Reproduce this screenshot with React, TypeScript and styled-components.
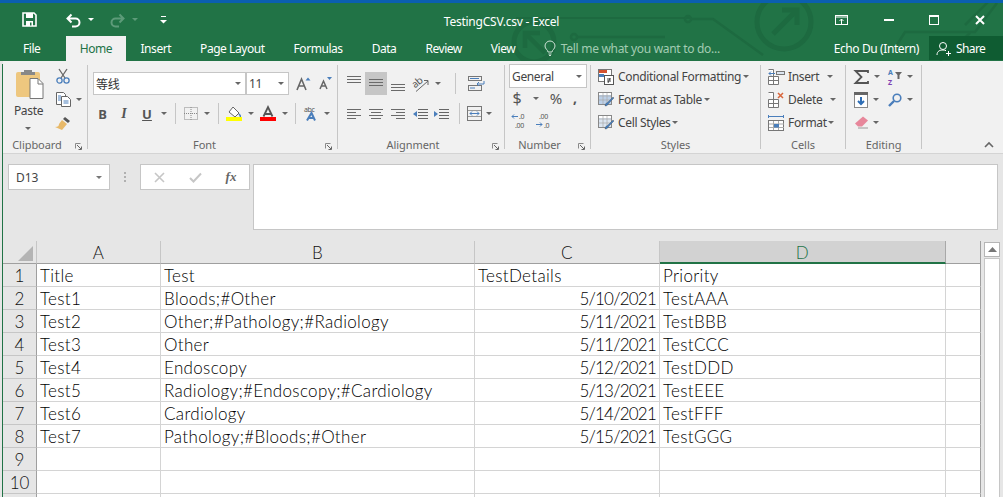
import React from "react";
import styled, { createGlobalStyle } from "styled-components";

const Global = createGlobalStyle`
  html, body { margin: 0; padding: 0; height: 100%; overflow: hidden; background: #e6e6e6; }
  #root { height: 100%; }
`;
const UI = `"Noto Sans", "Open Sans", sans-serif`;
const CELL = `Lato, Roboto, sans-serif`;

const Win = styled.div`
  width: 1003px; height: 497px; overflow: hidden; position: relative;
  display: flex; flex-direction: column; background: #e6e6e6;
  border-top: 3px solid #0b5fb0; box-sizing: border-box;
  font-family: ${UI}; color: #444;
`;
const Head = styled.div`
  height: 58px; background: #217346; position: relative; flex: none; display: flex; flex-direction: column;
  overflow: hidden;
`;
const Deco = styled.svg`position: absolute; left: 0; top: 0; pointer-events: none;`;
const TitleRow = styled.div`
  height: 33px; display: grid; grid-template-columns: 1fr auto 1fr; align-items: center; position: relative; color: #fff;
`;
const Quick = styled.div`display: flex; align-items: center; padding-left: 22px;`;
const QCell = styled.span<{ $w: number }>`width: ${p => p.$w}px; display: inline-flex; justify-content: flex-start; align-items: center;`;
const Title = styled.div`font-size: 12px; color: #fff; padding-top: 4px; letter-spacing: -0.02em;`;
const WinBtns = styled.div`display: flex; justify-content: flex-end; align-items: center; padding-right: 18px; gap: 35.66px;`;
const TabRow = styled.div`height: 25px; display: flex; align-items: stretch; position: relative; color: #fff; font-size: 12px; letter-spacing: -0.45px;`;
const FileTab = styled.div`width: 43px; padding-left: 23px; display: flex; align-items: center;`;
const Tab = styled.div<{ $active?: boolean }>`
  padding: 0 14.5px; display: flex; align-items: center; white-space: nowrap;
  ${p => p.$active ? "background:#f1f1f1;color:#217346;width:60px;box-sizing:border-box;padding:0;justify-content:center;" : ""}
`;
const Tell = styled.div`display: flex; align-items: center; gap: 5px; padding-left: 14px; color: #a3ccb3; white-space: nowrap; letter-spacing: -0.3px;`;
const User = styled.div`margin-left: auto; display: flex; align-items: center; padding-right: 10px; white-space: nowrap; letter-spacing: -0.4px;`;
const Share = styled.div`width: 74px; height: 24px; margin-bottom: 1px; background: #0f5c32; display: flex; align-items: center; gap: 5px; padding-left: 7px; box-sizing: border-box; letter-spacing: -0.6px;`;

const Ribbon = styled.div`
  height: 92px; flex: none; margin-left: 3px; background: #f1f1f1; border-bottom: 1px solid #d4d4d4;
  display: flex; position: relative; font-size: 12px; letter-spacing: -0.35px;
`;
const Group = styled.div<{ $w: number; $last?: boolean }>`
  width: ${p => p.$w}px; box-sizing: border-box; flex: none; position: relative;
  display: flex; flex-direction: column; margin: 4px 0;
  ${p => p.$last ? "" : "border-right: 1px solid #c6c6c6;"}
`;
const GroupBody = styled.div`flex: 1; display: flex; min-height: 0;`;
const GroupLabel = styled.div<{ $pr?: number }>`
  height: 16px; line-height: 16px; text-align: center; color: #666; font-size: 11px; letter-spacing: -0.05px; margin-bottom: -4px;
  padding-right: ${p => p.$pr ?? 0}px;
`;
const Launcher = styled.span`position: absolute; right: 5px; bottom: -1px; width: 7px; height: 7px; display: block;`;
const Col = styled.div<{ $gap?: number; $pl?: number; $pt?: number }>`
  display: flex; flex-direction: column; flex: none; gap: ${p => p.$gap ?? 0}px; padding-left: ${p => p.$pl ?? 0}px; padding-top: ${p => p.$pt ?? 0}px;
`;
const Row = styled.div<{ $h?: number; $pl?: number; $gap?: number }>`
  display: flex; flex: none; align-items: center; height: ${p => p.$h ? p.$h + "px" : "auto"}; padding-left: ${p => p.$pl ?? 0}px; gap: ${p => p.$gap ?? 0}px; white-space: nowrap;
`;
const Tool = styled.span<{ $w: number; $sel?: boolean; $h?: number; $top?: number }>`
  width: ${p => p.$w}px; height: ${p => p.$h ? p.$h + "px" : "auto"}; flex: none; display: inline-flex; justify-content: center; box-sizing: border-box;
  align-items: ${p => p.$top !== undefined ? "flex-start" : "center"};
  ${p => p.$top !== undefined ? `padding-top:${p.$top}px;` : ""}
  ${p => p.$sel ? "background:#c6c6c6;" : ""}
`;
const Caret = styled.span<{ $c?: string }>`
  width: 0; height: 0; display: inline-block; flex: none;
  border-left: 3.5px solid transparent; border-right: 3.5px solid transparent; border-top: 3.5px solid ${p => p.$c ?? "#666"};
`;
const VSep = styled.span`width: 1px; height: 21px; background: #c6c6c6; display: block;`;
const PasteBtn = styled.div`width: 50px; margin-left: 3px; display: flex; flex-direction: column; align-items: center; padding-top: 4px; color: #444;`;
const PasteLabel = styled.span`margin: 4px 4px 0 0; line-height: 14px;`;
const PasteCaret = styled.span`margin: 8px 6px 0 0; display: block; line-height: 0;`;
const Combo = styled.div<{ $w: number; $h: number; $up?: number }>`
  width: ${p => p.$w}px; height: ${p => p.$h}px; box-sizing: border-box; background: #fff; border: 1px solid #c6c6c6;
  display: flex; align-items: center; justify-content: space-between; padding: 0 4px 0 2px; flex: none; color: #444;
  margin-top: ${p => -(p.$up ?? 0)}px;
`;
const ComboCJK = styled.span`font-family: "Noto Sans CJK SC", sans-serif; font-size: 12px; color: #333;`;
const StyleItem = styled.div`
  display: flex; flex: none; align-items: center; height: 23px; gap: 2px; color: #444; white-space: nowrap;
  & > svg { margin-right: 2px; }
`;
const CellItem = styled.div<{ $cw: number }>`
  display: flex; flex: none; align-items: center; height: 23px; gap: 3px; color: #444;
  & > b { font-weight: 400; width: ${p => p.$cw}px; display: inline-block; }
`;
const Collapse = styled.span`position: absolute; right: 9px; bottom: 5px; line-height: 0;`;
const Glyph = styled.span<{ $s: number }>`font-size: ${p => p.$s}px; color: #555; line-height: 16px; letter-spacing: 0;`;
const BoldGlyph = styled(Glyph)`font-weight: 700;`;
const SerifGlyph = styled(BoldGlyph)`font-family: "Liberation Serif", serif; font-style: italic;`;
const UnderGlyph = styled(BoldGlyph)`text-decoration: underline;`;

const FormulaBar = styled.div`
  height: 87px; flex: none; margin-left: 3px; padding: 10px 5px 0 5px; box-sizing: border-box; display: flex; align-items: flex-start;
  background: #e6e6e6; border-left: 0; position: relative;
`;
const NameBox = styled.div`
  width: 102px; height: 26px; box-sizing: border-box; background: #fff; border: 1px solid #c6c6c6; display: flex; align-items: center; justify-content: space-between; padding: 0 7px; font-size: 12px; color: #444;
`;
const Dots = styled.div`width: 30px; height: 26px; display: flex; flex-direction: column; align-items: center; justify-content: center; gap: 2px; & > i { width: 2px; height: 2px; background: #b0b0b0; display: block; }`;
const FxBox = styled.div`width: 110px; height: 26px; box-sizing: border-box; background: #fff; border: 1px solid #c6c6c6; display: flex; align-items: center; margin-right: 3px;`;
const FxCell = styled.span`flex: 1; display: inline-flex; justify-content: center; align-items: center;`;
const FxText = styled.span`font-family: "Liberation Serif", serif; font-style: italic; font-size: 13px; color: #666; font-weight: 700;`;
const FormulaInput = styled.div`flex: 1; height: 66px; box-sizing: border-box; background: #fff; border: 1px solid #c6c6c6;`;

const SheetWrap = styled.div`flex: 1; margin-left: 3px; display: flex; min-height: 0; overflow: hidden; position: relative;`;
const Green = styled.span`position: absolute; left: 2px; top: 61px; width: 1px; bottom: 0; background: #217346;`;
const Sheet = styled.div`
  display: grid; grid-template-columns: 34px 124px 314px 185px 286px 35px; grid-auto-rows: 23px; align-content: start; flex: none;
  font-family: ${CELL}; font-size: 17px; font-weight: 300; letter-spacing: 0.33px; color: #000;
`;
const Corner = styled.div`height: 23px; background: #e6e6e6; border-bottom: 1px solid #9f9f9f; border-right: 1px solid #c6c6c6; box-sizing: border-box; display: flex; align-items: flex-end; justify-content: flex-end; padding: 0 3px 2px 0;`;
const ColHead = styled.div<{ $sel?: boolean }>`
  height: 23px; box-sizing: border-box; text-align: center; line-height: 24px; font-size: 17px;
  background: ${p => p.$sel ? "#d2d2d2" : "#e6e6e6"}; color: ${p => p.$sel ? "#217346" : "#111"};
  border-right: 1px solid ${p => p.$sel ? "#a8a8a8" : "#c6c6c6"};
  border-bottom: ${p => p.$sel ? "2px solid #217346" : "1px solid #9f9f9f"};
`;
const ColBlank = styled.div`height: 23px; box-sizing: border-box; border-bottom: 1px solid #9f9f9f; border-right: 1px solid #9f9f9f;`;
const RowHead = styled.div`background: #e6e6e6; text-align: center; line-height: 24px; box-sizing: border-box; border-right: 1px solid #9f9f9f; border-bottom: 1px solid #c6c6c6; color: #111; letter-spacing: 0;`;
const Cell = styled.div<{ $right?: boolean; $edge?: boolean }>`
  background: #fff; box-sizing: border-box; line-height: 24px; padding: 0 3px; white-space: nowrap; overflow: hidden;
  border-right: 1px solid ${p => p.$edge ? "#9f9f9f" : "#d4d4d4"}; border-bottom: 1px solid #d4d4d4;
  text-align: ${p => p.$right ? "right" : "left"};
  ${p => p.$right ? "letter-spacing: -0.8px;" : ""}
`;
const Scroll = styled.div`width: 16px; margin: 1px 0 0 3px; flex: none; display: flex; flex-direction: column; gap: 1px;`;
const ScrollBtn = styled.div`height: 15px; background: #fff; border: 1px solid #b5b5b5; box-sizing: border-box; display: flex; align-items: center; justify-content: center;`;
const ScrollTrack = styled.div`flex: 1; background: #fff; border: 1px solid #c6c6c6; border-bottom: 0; box-sizing: border-box;`;

const Svg: React.FC<{ w: number; h: number; children: React.ReactNode }> = ({ w, h, children }) => (
  <svg width={w} height={h} viewBox={`0 0 ${w} ${h}`} fill="none" style={{ display: "block", flex: "none", overflow: "visible" }}>{children}</svg>
);
const L: React.FC = () => (
  <Launcher>
    <Svg w={7} h={7}><path d="M.5 .5h5M.5 .5v5" stroke="#8a8a8a" /><path d="M2 2l4 4M6.500 3.500v3h-3" stroke="#666" /></Svg>
  </Launcher>
);
const Lines: React.FC<{ ws: [number, number][]; gap: number }> = ({ ws, gap }) => (
  <Svg w={14} h={(ws.length - 1) * gap + 1}>
    {ws.map(([x, l], i) => <rect key={i} x={x} y={i * gap} width={l} height={1} fill="#6a6a6a" />)}
  </Svg>
);
const blue = "#4a7ebb";
const CF = () => (
  <Svg w={16} h={16}>
    <rect x=".5" y=".5" width="13" height="12" fill="#fff" stroke="#777" />
    <rect x="1" y="1" width="8" height="3" fill="#d35230" /><rect x="1" y="5" width="5" height="3" fill="#4a7ebb" />
    <rect x="6.500" y="6.500" width="9" height="9" fill="#fff" stroke="#555" />
    <path d="M9 10h4M9 12h4M12 9l-2 5" stroke="#444" />
  </Svg>
);
const TableIco: React.FC<{ fill: string }> = ({ fill }) => (
  <Svg w={16} h={16}>
    <rect x=".5" y=".5" width="13" height="12" fill="#fff" stroke="#888" />
    <rect x="1" y="3" width="12" height="9" fill={fill} />
    <path d="M1 4h12M1 8h12M5 1v11M9 1v11" stroke="#aaa" strokeWidth=".7" />
    <path d="M7 14c0-3 2-3 3-4l5-5 1 1-5 5c-1 1-1 3-4 3z" fill="#3f7cc0" stroke="#555" strokeWidth=".4" />
  </Svg>
);
const GridIco: React.FC<{ children?: React.ReactNode }> = ({ children }) => (
  <Svg w={17} h={16}>
    <path d="M.5 7.500h10v8H.5zM5.500 7.500v8M.5 11.500h10M.5 .5h5v7" stroke="#777" fill="#fff" />
    {children}
  </Svg>
);

export default function App() {
  const rows: [string, string, string, string][] = [
    ["Title", "Test", "TestDetails", "Priority"],
    ["Test1", "Bloods;#Other", "5/10/2021", "TestAAA"],
    ["Test2", "Other;#Pathology;#Radiology", "5/11/2021", "TestBBB"],
    ["Test3", "Other", "5/11/2021", "TestCCC"],
    ["Test4", "Endoscopy", "5/12/2021", "TestDDD"],
    ["Test5", "Radiology;#Endoscopy;#Cardiology", "5/13/2021", "TestEEE"],
    ["Test6", "Cardiology", "5/14/2021", "TestFFF"],
    ["Test7", "Pathology;#Bloods;#Other", "5/15/2021", "TestGGG"],
    ["", "", "", ""], ["", "", "", ""], ["", "", "", ""],
  ];
  return (
    <Win>
      <Global />
      <Head>
        <Deco width={1003} height={58} viewBox="0 0 1003 58" fill="none">
          <g stroke="#1d6a40" strokeWidth="2.500">
            <circle cx="534" cy="39" r="20" strokeWidth="5" />
            <path d="M545 50L526 31M525 45V30h15" strokeWidth="4.500" />
            <path d="M516 15H690" strokeWidth="2" />
            <circle cx="688" cy="16" r="3" />
            <path d="M691 16h22l50 36" />
            <circle cx="574" cy="34" r="3" />
            <path d="M577 34H665" />
            <circle cx="784" cy="19" r="27" strokeWidth="5" />
            <path d="M773 31L797 7M782 7h15v15" strokeWidth="5" />
            <path d="M893 48l12-19h70l22-29M940 58l30-28M965 22L990 -3" />
          </g>
        </Deco>
        <TitleRow>
          <Quick>
            <QCell $w={44}>
              <Svg w={15} h={15}><path d="M1 1h11l2 2v11H1z" stroke="#fff" strokeWidth="1.600" /><rect x="4" y="1" width="7" height="5" fill="#fff" /><rect x="4" y="9" width="7" height="5" fill="#fff" /><rect x="8" y="10.500" width="1.500" height="3" fill="#217346" /></Svg>
            </QCell>
            <QCell $w={22}><Svg w={15} h={14}><path d="M1.500 5.500h8a4 4 0 0 1 0 8H6M5.500 1.500L1.500 5.500l4 4" stroke="#fff" strokeWidth="2" /></Svg></QCell>
            <QCell $w={22}><Caret $c="#fff" /></QCell>
            <QCell $w={22}><Svg w={15} h={14}><path d="M13.500 5.500h-8a4 4 0 0 0 0 8H9M9.500 1.500l4 4-4 4" stroke="#5d9b79" strokeWidth="2" /></Svg></QCell>
            <QCell $w={28}><Caret $c="#5d9b79" /></QCell>
            <QCell $w={8}><Svg w={7} h={8}><rect x="1" y="0" width="5" height="1" fill="#fff" /><path d="M0 4h7L3.500 7.500z" fill="#fff" /></Svg></QCell>
          </Quick>
          <Title>TestingCSV.csv - Excel</Title>
          <WinBtns>
            <Svg w={13} h={10}><rect x=".5" y=".5" width="12" height="9" stroke="#fff" /><path d="M0 2h13" stroke="#fff" /><path d="M6.500 9V4M4.500 6l2-2 2 2" stroke="#fff" /></Svg>
            <Svg w={10} h={10}><rect x="0" y="4" width="10" height="2" fill="#fff" /></Svg>
            <Svg w={10} h={10}><rect x=".5" y=".5" width="9" height="9" stroke="#fff" /><rect width="10" height="2" fill="#fff" /></Svg>
            <Svg w={10} h={10}><path d="M1 1l8 8M9 1l-8 8" stroke="#fff" strokeWidth="2" /></Svg>
          </WinBtns>
        </TitleRow>
        <TabRow>
          <FileTab>File</FileTab>
          <Tab $active>Home</Tab>
          <Tab>Insert</Tab><Tab>Page Layout</Tab><Tab>Formulas</Tab><Tab>Data</Tab><Tab>Review</Tab><Tab>View</Tab>
          <Tell>
            <Svg w={12} h={15}><path d="M4 11c0-2-3-3-3-6a5 5 0 0 1 10 0c0 3-3 4-3 6zM4.500 13h3M5 14.500h2" stroke="#cfe3d7" /></Svg>
            Tell me what you want to do...
          </Tell>
          <User>Echo Du (Intern)</User>
          <Share>
            <Svg w={15} h={15}><circle cx="7" cy="5" r="3.500" stroke="#fff" /><path d="M1 14c0-4 3-5 6-5 1 0 2 .2 3 .7M10 12.500h5M12.500 10v5" stroke="#fff" /></Svg>
            Share
          </Share>
        </TabRow>
      </Head>

      <Ribbon>
        <Group $w={85}>
          <GroupBody>
            <PasteBtn>
              <Svg w={29} h={31}>
                <rect x="0" y="3" width="24" height="25" rx="2" fill="#eec77f" />
                <path d="M8 3V1h8v2h3v3H5V3z" fill="#888" />
                <path d="M14 9.500h8l5 5v15H14z" fill="#fff" stroke="#777" />
                <path d="M22 10v5h5" stroke="#777" />
              </Svg>
              <PasteLabel>Paste</PasteLabel>
              <PasteCaret><Caret /></PasteCaret>
            </PasteBtn>
            <Col>
              <Tool $w={16} $h={23}>
                <Svg w={15} h={15}><path d="M3 0l6 9M11 0L5 9" stroke="#666" strokeWidth="1.300" /><circle cx="3.500" cy="11.500" r="2.600" stroke={blue} strokeWidth="1.300" /><circle cx="10.500" cy="11.500" r="2.600" stroke={blue} strokeWidth="1.300" /></Svg>
              </Tool>
              <Row $h={23}>
                <Tool $w={16}><Svg w={15} h={15}><path d="M.5 .5h7l2 2v10h-9z" fill="#fff" stroke="#666" /><path d="M5.500 4.500h6l3 3v7h-9z" fill="#fff" stroke="#666" /><path d="M2 4h3M2 6h3M2 8h3M7.500 9h5M7.500 11h5" stroke={blue} /></Svg></Tool>
                <Tool $w={16}><Caret /></Tool>
              </Row>
              <Tool $w={16} $h={23}>
                <Svg w={16} h={14}><path d="M10 1l5 4-2 2-5-4z" fill="#555" /><path d="M7 4l5 4-5 6-7-3c3 0 4-1 4-3z" fill="#e8b969" /></Svg>
              </Tool>
            </Col>
          </GroupBody>
          <GroupLabel $pr={16}>Clipboard</GroupLabel>
          <L />
        </Group>

        <Group $w={250}>
          <GroupBody>
            <Col $pt={7} $gap={8}>
              <Row $pl={5}>
                <Combo $w={153} $h={23}><ComboCJK>等线</ComboCJK><Caret /></Combo>
                <Combo $w={43} $h={23}><span>11</span><Caret /></Combo>
                <Tool $w={29}><Svg w={15} h={14}><path d="M1 13L5.500 2 10 13M3 9h5" stroke="#666" strokeWidth="1.600" /><path d="M9.500 3.500L12 .5l2.500 3z" fill={blue} /></Svg></Tool>
                <Tool $w={14}><Svg w={13} h={13}><path d="M1 12l3.500-8L8 12M2.500 9h4" stroke="#666" strokeWidth="1.500" /><path d="M8 0h5l-2.500 3z" fill={blue} /></Svg></Tool>
              </Row>
              <Row $pl={4}>
                <Tool $w={21}><BoldGlyph $s={13}>B</BoldGlyph></Tool>
                <Tool $w={22}><SerifGlyph $s={14}>I</SerifGlyph></Tool>
                <Tool $w={24}><UnderGlyph $s={13}>U</UnderGlyph></Tool>
                <Tool $w={10}><Caret /></Tool>
                <Tool $w={12}><VSep /></Tool>
                <Tool $w={19}><Svg w={14} h={13}><rect x=".5" y=".5" width="13" height="12" stroke="#888" strokeDasharray="1 1" /><path d="M7 0v13M0 6.500h14" stroke="#888" strokeDasharray="1 1" /></Svg></Tool>
                <Tool $w={14}><Caret /></Tool>
                <Tool $w={8}><VSep /></Tool>
                <Tool $w={24}><Svg w={16} h={15}><path d="M7 1l6 6-4 4-6-5z" stroke="#666" fill="#fff" /><path d="M13 8c1 1 2 2 1 3" stroke={blue} strokeWidth="1.500" /><rect y="11" width="16" height="4" fill="#ff0" /></Svg></Tool>
                <Tool $w={9}><Caret /></Tool>
                <Tool $w={26}><Svg w={16} h={15}><path d="M3.500 10.500L8 1l4.500 9.500M5 8h6" stroke="#555" strokeWidth="1.800" /><rect y="11" width="16" height="4" fill="#f00" /></Svg></Tool>
                <Tool $w={8}><Caret /></Tool>
                <Tool $w={12}><VSep /></Tool>
                <Tool $w={20}><Svg w={15} h={15}><text x="0" y="6" fontSize="7" fill="#555" fontFamily="Noto Sans">abc</text><path d="M3 14.500L7.500 7 11 14.500M5 12h5" stroke={blue} strokeWidth="2" /></Svg></Tool>
                <Tool $w={12}><Caret /></Tool>
              </Row>
            </Col>
          </GroupBody>
          <GroupLabel $pr={16}>Font</GroupLabel>
          <L />
        </Group>

        <Group $w={167}>
          <GroupBody>
            <Col $pt={7} $gap={8}>
              <Row $pl={5}>
                <Tool $w={22} $h={23} $top={4}><Lines ws={[[0, 14], [0, 14], [0, 14]]} gap={3} /></Tool>
                <Tool $w={22} $h={23} $sel $top={7}><Lines ws={[[0, 14], [0, 14], [0, 14]]} gap={3} /></Tool>
                <Tool $w={22} $h={23} $top={12}><Lines ws={[[0, 14], [0, 14], [0, 14]]} gap={3} /></Tool>
                <Tool $w={24}><Svg w={16} h={16}><text x="0" y="9" fontSize="10" fill="#555" fontFamily="Noto Sans" transform="rotate(-40 6 8)">ab</text><path d="M3 15.500L15 5M11 4.500h4V9" stroke="#666" /></Svg></Tool>
                <Tool $w={10}><Caret /></Tool>
                <Tool $w={25}><VSep /></Tool>
                <Tool $w={16}><Svg w={17} h={15}><rect x=".5" y=".5" width="13" height="4" stroke="#777" /><rect x=".5" y="9.500" width="13" height="5" stroke="#777" /><path d="M2 2.500h9M2 12h5M16 5v3H9M11 6L9 8l2 2" stroke={blue} /></Svg></Tool>
              </Row>
              <Row $pl={5}>
                <Tool $w={22}><Lines ws={[[0, 14], [0, 9], [0, 14], [0, 9]]} gap={3} /></Tool>
                <Tool $w={22}><Lines ws={[[0, 14], [2, 10], [0, 14], [2, 10]]} gap={3} /></Tool>
                <Tool $w={22}><Lines ws={[[0, 14], [5, 9], [0, 14], [5, 9]]} gap={3} /></Tool>
                <Tool $w={21}><Svg w={16} h={10}><path d="M6 1h10M6 4h10M6 7h10M6 10h10" stroke="#666" transform="translate(0 -.5)" /><path d="M5 2L1 5l4 3z" fill={blue} /></Svg></Tool>
                <Tool $w={22}><Svg w={16} h={10}><path d="M6 1h10M6 4h10M6 7h10M6 10h10" stroke="#666" transform="translate(0 -.5)" /><path d="M1 2l4 3-4 3z" fill={blue} /></Svg></Tool>
                <Tool $w={14}><VSep /></Tool>
                <Tool $w={16}><Svg w={15} h={15}><rect x=".5" y=".5" width="14" height="14" stroke="#777" /><path d="M1 4.500h13M1 10.500h13" stroke="#999" /><path d="M3 7.500h9M5 5.500l-2 2 2 2M10 5.500l2 2-2 2" stroke={blue} /></Svg></Tool>
                <Tool $w={14}><Caret /></Tool>
              </Row>
            </Col>
          </GroupBody>
          <GroupLabel $pr={16}>Alignment</GroupLabel>
          <L />
        </Group>

        <Group $w={86}>
          <GroupBody>
            <Col $pl={4}>
              <Combo $w={78} $h={24} $up={1}><span>General</span><Caret /></Combo>
              <Row $h={20}>
                <Tool $w={16}><Glyph $s={16}>$</Glyph></Tool>
                <Tool $w={22}><Caret /></Tool>
                <Tool $w={18}><Glyph $s={15}>%</Glyph></Tool>
                <Tool $w={20}><BoldGlyph $s={14}>,</BoldGlyph></Tool>
              </Row>
              <Row $h={24} $pl={3} $gap={8}>
                <Svg w={16} h={15}><text x="7" y="5.500" fontSize="7" fill="#555" fontFamily="Noto Sans">.0</text><text x="3" y="15" fontSize="7" fill="#555" fontFamily="Noto Sans">.00</text><path d="M0 3.500h6M2 1.500l-2 2 2 2" stroke={blue} /></Svg>
                <Svg w={15} h={15}><text x="3" y="5.500" fontSize="7" fill="#555" fontFamily="Noto Sans">.00</text><text x="8" y="15" fontSize="7" fill="#555" fontFamily="Noto Sans">.0</text><path d="M0 11.500h6M4 9.500l2 2-2 2" stroke={blue} /></Svg>
              </Row>
            </Col>
          </GroupBody>
          <GroupLabel $pr={16}>Number</GroupLabel>
          <L />
        </Group>

        <Group $w={170}>
          <GroupBody>
            <Col $pl={7}>
              <StyleItem><CF />Conditional Formatting<Caret /></StyleItem>
              <StyleItem><TableIco fill="#bcd0e8" />Format as Table<Caret /></StyleItem>
              <StyleItem><TableIco fill="#dbe5f1" />Cell Styles<Caret /></StyleItem>
            </Col>
          </GroupBody>
          <GroupLabel>Styles</GroupLabel>
        </Group>

        <Group $w={85}>
          <GroupBody>
            <Col $pl={7}>
              <CellItem $cw={36}>
                <GridIco><rect x="8.500" y="2.500" width="8" height="3" stroke="#777" fill="#dbe5f1" /><path d="M1 4.500h6M3 2.500l-2 2 2 2" stroke={blue} /></GridIco>
                <b>Insert</b><Caret />
              </CellItem>
              <CellItem $cw={39}>
                <GridIco><path d="M10 1l5 5M15 1l-5 5" stroke="#d9663c" strokeWidth="1.500" /></GridIco>
                <b>Delete</b><Caret />
              </CellItem>
              <CellItem $cw={37}>
                <Svg w={17} h={16}><path d="M.5 1.500h15M.5 0v3M15.500 0v3" stroke={blue} /><rect x=".5" y="5.500" width="15" height="10" stroke="#777" fill="#fff" /><path d="M1 9h15M1 12.500h15M5.500 6v9M10.500 6v9" stroke="#aaa" /><rect x="6" y="9" width="5" height="3.500" fill={blue} /></Svg>
                <b>Format</b><Caret />
              </CellItem>
            </Col>
          </GroupBody>
          <GroupLabel>Cells</GroupLabel>
        </Group>

        <Group $w={76}>
          <GroupBody>
            <Col $pl={7}>
              <Row $h={23}>
                <Tool $w={16}><Svg w={15} h={14}><path d="M14 3V1H1.500l6 6-6 6H14v-2" stroke="#555" strokeWidth="1.800" /></Svg></Tool>
                <Tool $w={16}><Caret /></Tool>
                <Tool $w={22}><Svg w={18} h={16}><text x="1" y="6" fontSize="7" fill={blue} fontFamily="Noto Sans" fontWeight="700">A</text><text x="1" y="15.600" fontSize="7" fill="#7d3fb2" fontFamily="Noto Sans" fontWeight="700">Z</text><path d="M8 3h7l-2.500 3v4H10.500V6z" fill="#666" /></Svg></Tool>
                <Tool $w={6}><Caret /></Tool>
              </Row>
              <Row $h={23}>
                <Tool $w={16}><Svg w={14} h={16}><rect x=".5" y=".5" width="13" height="15" fill="#fff" stroke="#888" /><rect width="14" height="3" fill="#666" /><path d="M7 5v7M4 9l3 3 3-3" stroke="#2d6db5" strokeWidth="2" /></Svg></Tool>
                <Tool $w={14}><Caret /></Tool>
                <Tool $w={24}><Svg w={14} h={14}><circle cx="9" cy="5" r="3.800" stroke={blue} strokeWidth="1.600" /><path d="M6 8l-5 5" stroke={blue} strokeWidth="2.400" /></Svg></Tool>
                <Tool $w={6}><Caret /></Tool>
              </Row>
              <Row $h={23}>
                <Tool $w={16}><Svg w={15} h={13}><path d="M9 .5l5 4-6 6H4l-3-3z" fill="#e7879b" /><path d="M4 12h10" stroke="#999" /></Svg></Tool>
                <Tool $w={14}><Caret /></Tool>
              </Row>
            </Col>
          </GroupBody>
          <GroupLabel>Editing</GroupLabel>
        </Group>
        <Collapse><Svg w={10} h={6}><path d="M1 5l4-4 4 4" stroke="#666" strokeWidth="1.600" /></Svg></Collapse>
      </Ribbon>

      <FormulaBar>
        <NameBox>D13<Caret $c="#777" /></NameBox>
        <Dots><i /><i /><i /></Dots>
        <FxBox>
          <FxCell><Svg w={11} h={11}><path d="M1 1l9 9M10 1l-9 9" stroke="#c6c6c6" strokeWidth="1.600" /></Svg></FxCell>
          <FxCell><Svg w={13} h={11}><path d="M1 6l3.500 3.500L12 1.500" stroke="#c6c6c6" strokeWidth="2" /></Svg></FxCell>
          <FxCell><FxText>fx</FxText></FxCell>
        </FxBox>
        <FormulaInput />
      </FormulaBar>

      <SheetWrap>
        <Sheet>
          <Corner><Svg w={15} h={15}><path d="M15 0v15H0z" fill="#b4b4b4" /></Svg></Corner>
          <ColHead>A</ColHead><ColHead>B</ColHead><ColHead>C</ColHead><ColHead $sel>D</ColHead><ColBlank />
          {rows.map((r, i) => (
            <React.Fragment key={i}>
              <RowHead>{i < 10 ? i + 1 : ""}</RowHead>
              <Cell>{r[0]}</Cell>
              <Cell>{r[1]}</Cell>
              <Cell $right={i > 0}>{r[2]}</Cell>
              <Cell>{r[3]}</Cell>
              <Cell $edge />
            </React.Fragment>
          ))}
        </Sheet>
        <Scroll>
          <ScrollBtn><Svg w={9} h={5}><path d="M0 5l4.500-5L9 5z" fill="#777" /></Svg></ScrollBtn>
          <ScrollTrack />
        </Scroll>
      </SheetWrap>
      <Green />
    </Win>
  );
}
